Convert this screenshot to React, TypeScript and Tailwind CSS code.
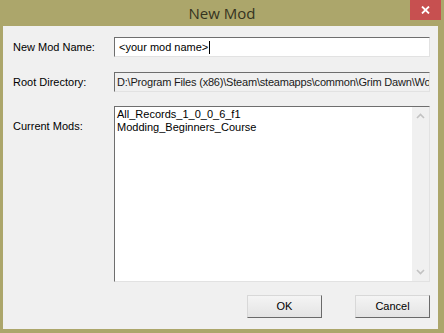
import React from "react";

const ui = { fontFamily: '"Liberation Sans", Tahoma, Arial, sans-serif' };

function Chevron({ up }: { up?: boolean }) {
    return (
        <svg width="9" height="6" viewBox="0 0 9 6" className="block">
            <path
                d={up ? "M1 5 L4.5 1.5 L8 5" : "M1 1 L4.5 4.5 L8 1"}
                fill="none"
                stroke="#c2c2c2"
                strokeWidth="1.6"
            />
        </svg>
    );
}

function WinButton({ label }: { label: string }) {
    return (
        <button
            className="w-[75px] h-[23px] text-[11px] text-black border border-t-[#d8d8d8] border-l-[#d8d8d8] border-r-[#6a6a6a] border-b-[#6a6a6a] bg-gradient-to-b from-[#f4f4f4] to-[#e4e4e4]"
            style={ui}
        >
            {label}
        </button>
    );
}

export default function App() {
    const mods = ["All_Records_1_0_0_6_f1", "Modding_Beginners_Course"];

    return (
        <div className="w-[444px] h-[333px] bg-[#aca66b] flex flex-col overflow-hidden">
            {/* title bar */}
            <div className="relative h-[26px] shrink-0 flex items-center justify-center">
                <span
                    className="text-[15px] text-[#35331f] leading-none"
                    style={{ fontFamily: '"Open Sans", "Noto Sans", sans-serif' }}
                >
                    New Mod
                </span>
                <div className="absolute right-[3px] top-0 w-[31px] h-[20px] bg-[#c75050] flex items-center justify-center">
                    <svg width="9" height="8" viewBox="0 0 9 8">
                        <path d="M1 0.5 L8 7.5 M8 0.5 L1 7.5" stroke="#ffffff" strokeWidth="1.8" />
                    </svg>
                </div>
            </div>

            {/* client area */}
            <div className="flex-1 ml-[3px] mr-[6px] mb-[4px] bg-[#f0f0f0] pt-[11px] pl-[10px] pr-[8px] pb-[11px] flex flex-col text-[11px] text-black" style={ui}>
                <div className="flex items-center h-[20px]">
                    <div className="w-[101px] shrink-0">New Mod Name:</div>
                    <div className="flex-1 h-full bg-white border border-t-[#6e6e6e] border-l-[#6e6e6e] border-r-[#e2e2e2] border-b-[#e2e2e2] flex items-center pl-[4px]">
                        <span>&lt;your mod name&gt;</span>
                        <span className="w-px h-[13px] bg-black ml-px" />
                    </div>
                </div>

                <div className="flex items-center h-[20px] mt-[15px]">
                    <div className="w-[101px] shrink-0">Root Directory:</div>
                    <div className="flex-1 h-full bg-[#f0f0f0] border border-t-[#6e6e6e] border-l-[#6e6e6e] border-r-[#e2e2e2] border-b-[#e2e2e2] flex items-center pl-[2px] overflow-hidden whitespace-nowrap text-[#1a1a1a] tracking-[-0.2px]">
                        D:\Program Files (x86)\Steam\steamapps\common\Grim Dawn\Working
                    </div>
                </div>

                <div className="flex h-[176px] mt-[14px]">
                    <div className="w-[101px] shrink-0 pt-[12px]">Current Mods:</div>
                    <div className="flex-1 h-full bg-white border border-t-[#6e6e6e] border-l-[#6e6e6e] border-r-[#e2e2e2] border-b-[#e2e2e2] flex">
                        <div className="flex-1 pl-[2px] pt-px leading-[13px]">
                            {mods.map(m => (
                                <div key={m}>{m}</div>
                            ))}
                        </div>
                        <div className="w-[17px] bg-[#f0f0f0] flex flex-col justify-between items-center py-[6px]">
                            <Chevron up />
                            <Chevron />
                        </div>
                    </div>
                </div>

                <div className="flex justify-end gap-[33px] mt-[13px]">
                    <WinButton label="OK" />
                    <WinButton label="Cancel" />
                </div>
            </div>
        </div>
    );
}
